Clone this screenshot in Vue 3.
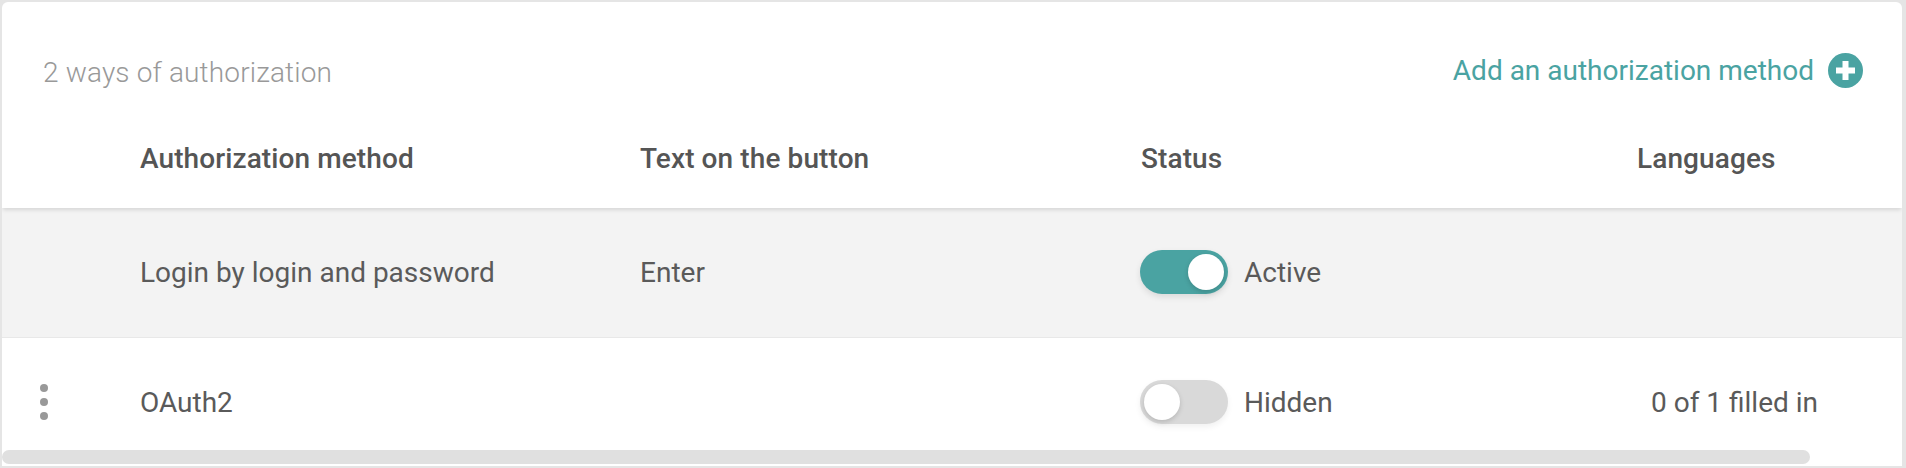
<template>
  <div class="card">
    <div class="top">
      <span class="count">2 ways of authorization</span>
      <a class="add">
        Add an authorization method
        <svg class="add-icon" viewBox="0 0 35 35">
          <circle cx="17.5" cy="17.5" r="17.5" fill="#4aa3a2" />
          <path d="M17.5 8v19M8 17.5h19" stroke="#fff" stroke-width="6" />
        </svg>
      </a>
    </div>
    <div class="row head">
      <div></div>
      <div>Authorization method</div>
      <div>Text on the button</div>
      <div>Status</div>
      <div>Languages</div>
    </div>
    <div
      v-for="item in methods"
      :key="item.name"
      class="row item"
      :class="{ fixed: item.fixed }"
    >
      <div class="handle">
        <template v-if="!item.fixed">
          <i></i><i></i><i></i>
        </template>
      </div>
      <div>{{ item.name }}</div>
      <div>{{ item.button }}</div>
      <div class="status">
        <span class="toggle" :class="{ on: item.active }"><b></b></span>
        {{ item.active ? 'Active' : 'Hidden' }}
      </div>
      <div class="langs">{{ item.langs }}</div>
    </div>
    <div class="scroll"><div class="thumb"></div></div>
  </div>
</template>

<script setup>
const methods = [
  { name: 'Login by login and password', button: 'Enter', active: true, langs: '', fixed: true },
  { name: 'OAuth2', button: '', active: false, langs: '0 of 1 filled in', fixed: false },
];
</script>

<style>
html,
body {
  margin: 0;
  background: #e5e5e5;
}
</style>

<style scoped>
.card {
  box-sizing: border-box;
  width: 1900px;
  height: 464px;
  margin: 2px 0 0 2px;
  background: #fff;
  border-radius: 6px 6px 0 0;
  font-family: Roboto, sans-serif;
  font-size: 28px;
  color: #555;
  overflow: hidden;
}

.top {
  display: flex;
  justify-content: space-between;
  align-items: center;
  height: 112px;
  padding: 0 39px 0 41px;
}

.count {
  font-weight: 300;
  letter-spacing: 0.15px;
  color: #999;
  margin-top: 29px;
}

.add {
  display: flex;
  align-items: center;
  gap: 14px;
  margin-top: 25px;
  color: #4aa3a2;
}

.add-icon {
  width: 35px;
  height: 35px;
}

.row {
  display: grid;
  grid-template-columns: 138px 500px 501px 496px 1fr;
  align-items: center;
}

.head {
  box-sizing: border-box;
  height: 94px;
  padding-bottom: 6px;
  font-weight: 500;
  letter-spacing: 0.1px;
  position: relative;
  box-shadow: 0 3px 4px -1px rgba(0, 0, 0, 0.12);
}

.item {
  height: 128px;
  color: #5a5a5a;
}

.item.fixed {
  height: 130px;
  background: #f3f3f3;
  border-bottom: 1px solid #e8e8e8;
  box-sizing: border-box;
}

.handle {
  display: flex;
  flex-direction: column;
  align-items: center;
  gap: 6px;
  width: 84px;
}

.handle i {
  width: 8px;
  height: 8px;
  border-radius: 50%;
  background: #999;
}

.status {
  display: flex;
  align-items: center;
  gap: 16px;
}

.toggle {
  display: flex;
  box-sizing: border-box;
  width: 88px;
  height: 44px;
  margin-left: -1px;
  padding: 4px;
  border-radius: 22px;
  background: #d9d9d9;
  box-shadow: 0 3px 6px rgba(0, 0, 0, 0.06);
}

.toggle.on {
  justify-content: flex-end;
  margin-top: -1px;
  background: #4aa3a2;
  box-shadow: 0 3px 6px rgba(0, 0, 0, 0.1);
}

.toggle b {
  width: 36px;
  height: 36px;
  border-radius: 50%;
  background: #fff;
  box-shadow: 0 2px 5px rgba(0, 0, 0, 0.16);
}

.langs {
  padding-left: 14px;
}

.scroll {
  height: 14px;
  margin-top: -16px;
  position: relative;
}

.thumb {
  width: 1808px;
  height: 14px;
  background: #e0e0e0;
  border-radius: 7px;
}
</style>
